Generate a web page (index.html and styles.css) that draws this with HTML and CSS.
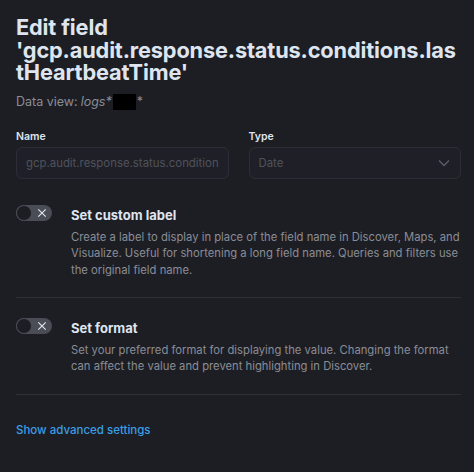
FILE: index.html
```html
<!DOCTYPE html>
<html lang="en">
<head>
<meta charset="utf-8">
<link rel="stylesheet" href="styles.css">
</head>
<body>
<div class="flyout">
  <h2 class="title">Edit field 'gcp.audit.response.status.conditions.lastHeartbeatTime'</h2>
  <div class="dataview">Data view: <i>logs*</i><span class="redact"></span>*</div>

  <div class="form-row">
    <div class="field">
      <label class="label">Name</label>
      <div class="input"><span class="input-text">gcp.audit.response.status.conditions.lastHeartbeatTime</span></div>
    </div>
    <div class="field">
      <label class="label">Type</label>
      <div class="input select">
        <span class="input-text">Date</span>
        <svg class="chevron" width="12" height="8" viewBox="0 0 12 8"><path d="M1 1.5 L6 6.5 L11 1.5" fill="none" stroke="#5a5d68" stroke-width="1.3"/></svg>
      </div>
    </div>
  </div>

  <div class="setting">
    <div class="toggle"><span class="knob"></span><svg class="x" width="10" height="10" viewBox="0 0 10 10"><path d="M1.3 1.3 L8.7 8.7 M8.7 1.3 L1.3 8.7" stroke="#dfe5ef" stroke-width="1.2"/></svg></div>
    <div class="setting-body">
      <div class="setting-title">Set custom label</div>
      <p class="setting-desc">Create a label to display in place of the field name in Discover, Maps, and Visualize. Useful for shortening a long field name. Queries and filters use the original field name.</p>
    </div>
  </div>
  <hr class="divider first">
  <div class="setting">
    <div class="toggle"><span class="knob"></span><svg class="x" width="10" height="10" viewBox="0 0 10 10"><path d="M1.3 1.3 L8.7 8.7 M8.7 1.3 L1.3 8.7" stroke="#dfe5ef" stroke-width="1.2"/></svg></div>
    <div class="setting-body">
      <div class="setting-title">Set format</div>
      <p class="setting-desc">Set your preferred format for displaying the value. Changing the format can affect the value and prevent highlighting in Discover.</p>
    </div>
  </div>
  <hr class="divider second">
  <a class="advanced" href="#">Show advanced settings</a>
</div>
</body>
</html>
```
FILE: styles.css
```css
* { box-sizing: border-box; }
html, body { margin: 0; padding: 0; background: #1d1e24; }
body { font-family: Inter, "Noto Sans", sans-serif; color: #dfe5ef; }
.flyout { width: 461px; padding: 16px 0 0 16px; }
.title {
  margin: 0;
  font-size: 21.75px;
  line-height: 22.5px;
  font-weight: 700;
  color: #dfe5ef;
  overflow-wrap: break-word;
  letter-spacing: -0.15px;
}
.dataview {
  margin-top: 9px;
  font-size: 12.5px;
  line-height: 18px;
  color: #8a8d96;
  display: flex;
  align-items: center;
}
.dataview i { margin-left: 3px; }
.redact { display: inline-block; width: 23px; height: 16px; background: #000; margin: 0 1px 0 1px; }
.form-row { display: flex; gap: 20px; margin-top: 18px; }
.field { flex: 1; display: flex; flex-direction: column; gap: 2px; min-width: 0; }
.label { font-size: 10.5px; line-height: 16px; font-weight: 600; color: #dfe5ef; }
.input {
  height: 32px;
  border: 1px solid #2c2e37;
  border-radius: 6px;
  background: #1f2027;
  display: flex;
  align-items: center;
  padding: 0 9px;
  overflow: hidden;
}
.input-text {
  flex: 1;
  min-width: 0;
  font-size: 11.4px;
  color: #4f525c;
  white-space: nowrap;
  overflow: hidden;
  text-overflow: clip;
}
.select { justify-content: space-between; padding-right: 10px; }
.chevron { flex: none; }
.setting { display: flex; gap: 19px; margin-top: 26px; }
.toggle {
  flex: none;
  position: relative;
  width: 36px;
  height: 16px;
  border-radius: 8px;
  background: #4a4c56;
}
.knob {
  position: absolute;
  left: 0; top: 0;
  width: 16px; height: 16px;
  border-radius: 50%;
  background: #1d1e24;
  border: 1.5px solid #4a4c56;
}
.x { position: absolute; left: 21px; top: 3px; }
.setting-body { flex: 1; }
.setting-title { font-size: 13px; line-height: 20px; font-weight: 700; color: #dfe5ef; }
.setting-desc {
  margin: 4px 0 0 0;
  font-size: 11.25px;
  line-height: 16.7px;
  color: #8a8d96;
}
.divider { border: 0; border-top: 1px solid #2e3038; margin: 18px 0 0 0; }
.divider.first + .setting { margin-top: 20px; }
.divider.second { margin-top: 19px; }
.advanced {
  display: block;
  margin-top: 26px;
  font-size: 11.5px;
  line-height: 18px;
  font-weight: 500;
  color: #3a9fe6;
  text-decoration: none;
}
```
